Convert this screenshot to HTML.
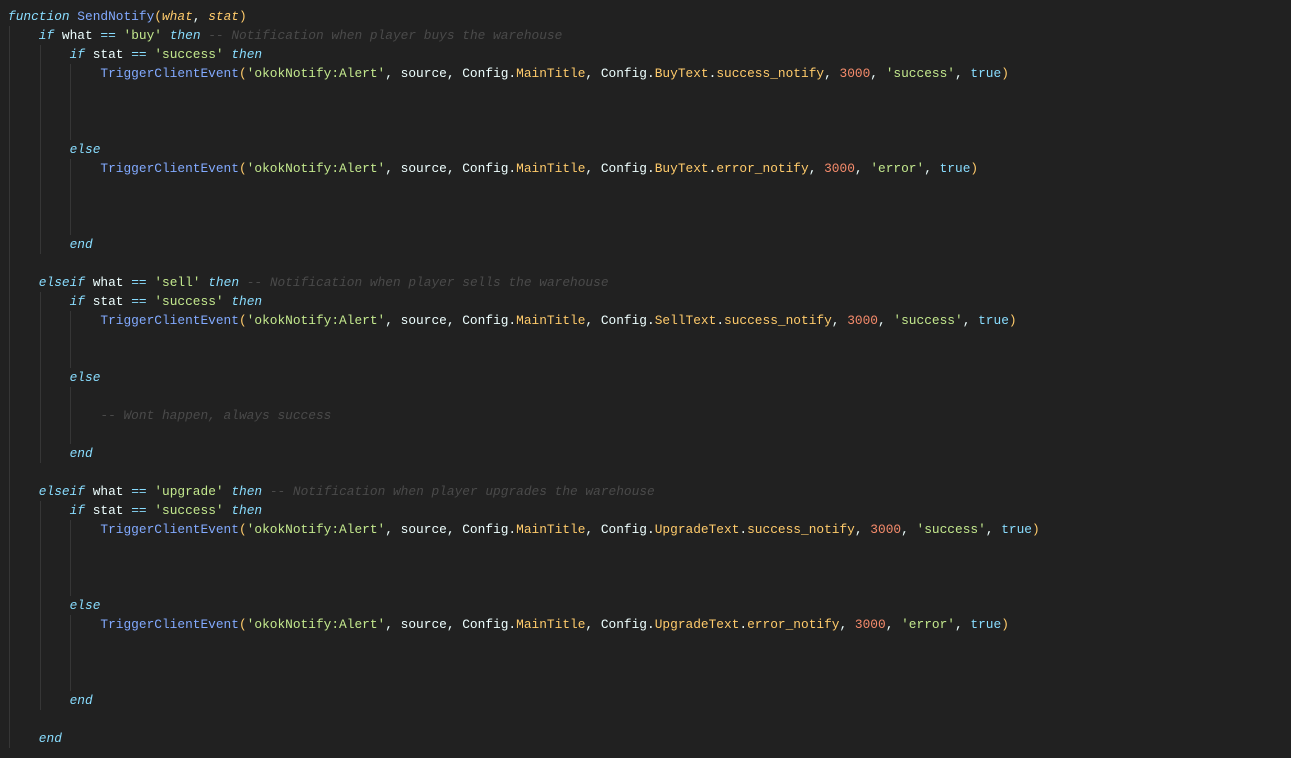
<!DOCTYPE html>
<html><head><meta charset="utf-8"><style>
html,body{margin:0;padding:0;background:#212121;width:1291px;height:758px;overflow:hidden}
pre{margin:0;padding:7px 0 0 8px;font-family:"Liberation Mono",monospace;font-size:12.83px;line-height:19px;color:#eeffff;position:relative;z-index:1}
.k{color:#89ddff;font-style:italic}
.f{color:#82aaff}
.p{color:#ffcb6b}
.s{color:#c3e88d}
.n{color:#f78c6c}
.c{color:#4a4a4a;font-style:italic}
.a{color:#ffcb6b;font-style:italic}
.t{color:#89ddff}
.g{position:absolute;width:1px;background:#363636}
</style></head><body>
<div class="g" style="left:9px;top:26px;height:722px"></div>
<div class="g" style="left:40px;top:45px;height:209px"></div>
<div class="g" style="left:40px;top:292px;height:171px"></div>
<div class="g" style="left:40px;top:501px;height:209px"></div>
<div class="g" style="left:70px;top:64px;height:76px"></div>
<div class="g" style="left:70px;top:159px;height:76px"></div>
<div class="g" style="left:70px;top:311px;height:57px"></div>
<div class="g" style="left:70px;top:387px;height:57px"></div>
<div class="g" style="left:70px;top:520px;height:76px"></div>
<div class="g" style="left:70px;top:615px;height:76px"></div>
<pre><span class="k">function</span> <span class="f">SendNotify</span><span class="p">(</span><span class="a">what</span>, <span class="a">stat</span><span class="p">)</span>
    <span class="k">if</span> what <span class="t">==</span> <span class="s">'buy'</span> <span class="k">then</span> <span class="c">-- Notification when player buys the warehouse</span>
        <span class="k">if</span> stat <span class="t">==</span> <span class="s">'success'</span> <span class="k">then</span>
            <span class="f">TriggerClientEvent</span><span class="p">(</span><span class="s">'okokNotify:Alert'</span>, source, Config.<span class="p">MainTitle</span>, Config.<span class="p">BuyText</span>.<span class="p">success_notify</span>, <span class="n">3000</span>, <span class="s">'success'</span>, <span class="t">true</span><span class="p">)</span>



        <span class="k">else</span>
            <span class="f">TriggerClientEvent</span><span class="p">(</span><span class="s">'okokNotify:Alert'</span>, source, Config.<span class="p">MainTitle</span>, Config.<span class="p">BuyText</span>.<span class="p">error_notify</span>, <span class="n">3000</span>, <span class="s">'error'</span>, <span class="t">true</span><span class="p">)</span>



        <span class="k">end</span>

    <span class="k">elseif</span> what <span class="t">==</span> <span class="s">'sell'</span> <span class="k">then</span> <span class="c">-- Notification when player sells the warehouse</span>
        <span class="k">if</span> stat <span class="t">==</span> <span class="s">'success'</span> <span class="k">then</span>
            <span class="f">TriggerClientEvent</span><span class="p">(</span><span class="s">'okokNotify:Alert'</span>, source, Config.<span class="p">MainTitle</span>, Config.<span class="p">SellText</span>.<span class="p">success_notify</span>, <span class="n">3000</span>, <span class="s">'success'</span>, <span class="t">true</span><span class="p">)</span>


        <span class="k">else</span>

            <span class="c">-- Wont happen, always success</span>

        <span class="k">end</span>

    <span class="k">elseif</span> what <span class="t">==</span> <span class="s">'upgrade'</span> <span class="k">then</span> <span class="c">-- Notification when player upgrades the warehouse</span>
        <span class="k">if</span> stat <span class="t">==</span> <span class="s">'success'</span> <span class="k">then</span>
            <span class="f">TriggerClientEvent</span><span class="p">(</span><span class="s">'okokNotify:Alert'</span>, source, Config.<span class="p">MainTitle</span>, Config.<span class="p">UpgradeText</span>.<span class="p">success_notify</span>, <span class="n">3000</span>, <span class="s">'success'</span>, <span class="t">true</span><span class="p">)</span>



        <span class="k">else</span>
            <span class="f">TriggerClientEvent</span><span class="p">(</span><span class="s">'okokNotify:Alert'</span>, source, Config.<span class="p">MainTitle</span>, Config.<span class="p">UpgradeText</span>.<span class="p">error_notify</span>, <span class="n">3000</span>, <span class="s">'error'</span>, <span class="t">true</span><span class="p">)</span>



        <span class="k">end</span>

    <span class="k">end</span>
</pre>
</body></html>
